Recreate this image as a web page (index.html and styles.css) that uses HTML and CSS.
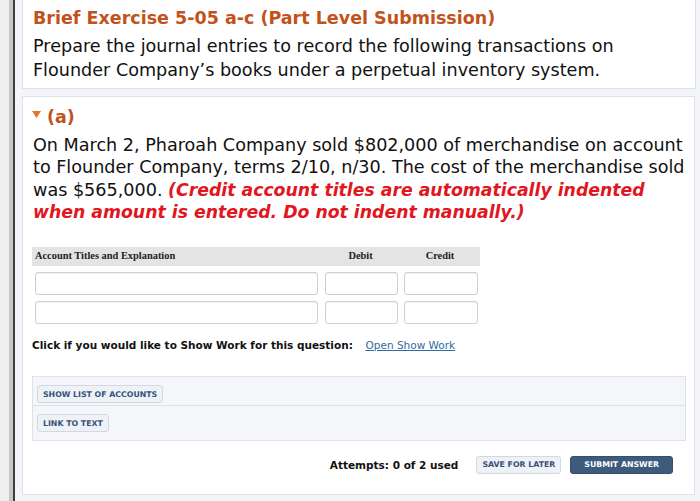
FILE: index.html
```html
<!DOCTYPE html>
<html>
<head>
<meta charset="utf-8">
<link rel="stylesheet" href="styles.css">
</head>
<body>
<div class="page">
  <div class="rail"></div>
  <div class="rail-line"></div>
  <main class="content">
    <section class="card intro">
      <h1 class="title">Brief Exercise 5-05 a-c (Part Level Submission)</h1>
      <p class="lead">Prepare the journal entries to record the following transactions on Flounder Company’s books under a perpetual inventory system.</p>
    </section>
    <section class="card part">
      <h2 class="part-head"><svg class="caret" width="9" height="7" viewBox="0 0 9 7"><polygon points="0,0 9,0 4.5,7" fill="#e1782c"/></svg>(a)</h2>
      <p class="question">On March 2, Pharoah Company sold $802,000 of merchandise on account to Flounder Company, terms 2/10, n/30. The cost of the merchandise sold was $565,000. <em class="note">(Credit account titles are automatically indented when amount is entered. Do not indent manually.)</em></p>
      <div class="journal">
        <div class="jh jh-acct">Account Titles and Explanation</div>
        <div class="jh jh-num">Debit</div>
        <div class="jh jh-num">Credit</div>
        <div class="cell"><input class="field" type="text"></div>
        <div class="cell num"><input class="field" type="text"></div>
        <div class="cell num"><input class="field" type="text"></div>
        <div class="cell"><input class="field" type="text"></div>
        <div class="cell num"><input class="field" type="text"></div>
        <div class="cell num"><input class="field" type="text"></div>
      </div>
      <p class="showwork">Click if you would like to Show Work for this question: <a class="link" href="#">Open Show Work</a></p>
      <div class="tools">
        <div class="tool-row"><button class="btn">SHOW LIST OF ACCOUNTS</button></div>
        <div class="tool-row last"><button class="btn">LINK TO TEXT</button></div>
      </div>
      <div class="submit-row">
        <span class="attempts">Attempts: 0 of 2 used</span>
        <button class="btn save">SAVE FOR LATER</button>
        <button class="btn primary">SUBMIT ANSWER</button>
      </div>
    </section>
  </main>
</div>
</body>
</html>
```
FILE: styles.css
```css
html, body {
  margin: 0;
  padding: 0;
  background: #f3f5f8;
  font-family: "DejaVu Sans", Verdana, sans-serif;
  color: #111;
}
.page {
  display: flex;
  min-height: 501px;
}
.rail {
  width: 9px;
  background: #eeeeee;
  border-right: 4px solid #c6c6c6;
  flex: none;
}
.rail-line {
  width: 2px;
  background: #3e3e3e;
  flex: none;
}
.content {
  flex: 1;
  padding: 0 4px 0 7px;
  display: flex;
  flex-direction: column;
  gap: 7px;
}
.card {
  background: #ffffff;
  border: 1px solid #dde2e8;
}
.intro {
  border-top: none;
  padding: 6px 10px 6px 10px;
}
.title {
  margin: 0;
  font-size: 17.5px;
  line-height: 24px;
  font-weight: bold;
  color: #c2521b;
}
.lead {
  margin: 4px 0 0 0;
  font-size: 17.6px;
  line-height: 24px;
}
.part {
  margin-right: 1px;
  padding: 8px 8px 20px 9px;
}
.part-head {
  margin: 0;
  font-size: 17.5px;
  line-height: 24px;
  font-weight: bold;
  color: #c2521b;
  display: flex;
  align-items: center;
  gap: 6px;
}
.caret {
  margin-top: -6px;
}
.question {
  margin: 5px 0 0 1px;
  font-size: 17.6px;
  line-height: 22.4px;
}
.note {
  color: #e2161f;
  font-weight: bold;
  font-size: 17.3px;
}
.journal {
  margin-top: 23px;
  width: 448px;
  display: grid;
  grid-template-columns: 289px 79px 80px;
  row-gap: 6px;
}
.jh {
  background: #e4e4e4;
  height: 19px;
  line-height: 17px;
  font-family: "Liberation Serif", "Times New Roman", serif;
  font-weight: bold;
  font-size: 10.4px;
  color: #222;
}
.jh-acct {
  padding-left: 3px;
}
.jh-num {
  text-align: center;
}
.cell {
  padding: 0 3px;
}
.cell.num {
  padding: 0 2px 0 4px;
}
.field {
  display: block;
  box-sizing: border-box;
  width: 100%;
  height: 23px;
  margin: 0;
  border: 1px solid #cfcfcf;
  border-radius: 3px;
  background: #fff;
  box-shadow: inset 0 1px 1px rgba(0,0,0,0.06);
}
.showwork {
  margin: 13px 0 0 0;
  font-size: 10.5px;
  line-height: 16px;
  font-weight: bold;
}
.link {
  margin-left: 9px;
  font-weight: normal;
  color: #2f6b9e;
}
.tools {
  margin-top: 23px;
  background: #f4f6f9;
  border: 1px solid #dfe3e8;
}
.tool-row {
  padding: 5px 0 5px 4px;
  height: 18px;
}
.tool-row.last {
  border-top: 1px solid #dfe3e8;
  padding-bottom: 11px;
}
.btn {
  height: 18px;
  padding: 0 5px;
  font-family: "DejaVu Sans", Verdana, sans-serif;
  font-size: 7.8px;
  font-weight: bold;
  color: #35527a;
  background: #eef1f5;
  border: 1px solid #d3d9e0;
  border-radius: 3px;
}
.submit-row {
  margin-top: 15px;
  display: flex;
  justify-content: flex-end;
  align-items: center;
  padding-right: 13px;
}
.attempts {
  font-size: 10.5px;
  font-weight: bold;
  margin-right: 18px;
}
.save {
  margin-right: 9px;
  padding: 0 5px;
}
.primary {
  background: #3e5b7c;
  border-color: #34506f;
  color: #ffffff;
  padding: 0 13px;
}
```
